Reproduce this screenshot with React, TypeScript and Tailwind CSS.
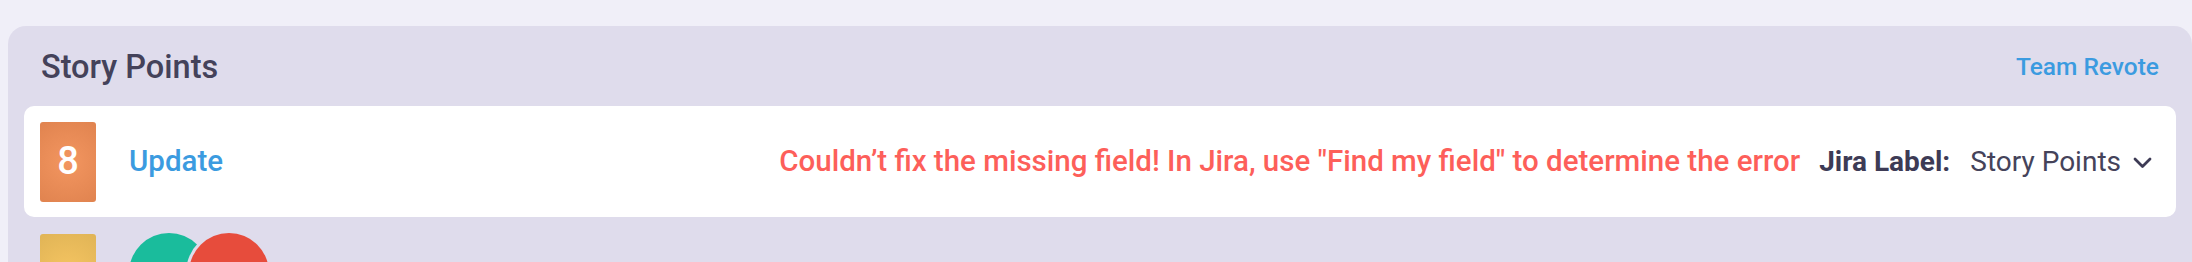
const font = { fontFamily: "Roboto, 'Liberation Sans', sans-serif" };

export default function App() {
  return (
    <div className="w-[2192px] h-[262px] overflow-hidden bg-[#f0eff8] pt-[26px] pl-2" style={font}>
      <div className="rounded-tl-[18px] rounded-tr-[18px] bg-[#dfdcec] px-4 pt-4 h-[260px]">
        {/* header */}
        <div className="flex h-[50px] items-center justify-between px-[17px]">
          <h2 className="text-[32.5px] font-medium text-[#44425a]">Story Points</h2>
          <button className="text-[24.5px] font-medium text-[#3b9be0]">Team Revote</button>
        </div>

        {/* row with the failed vote */}
        <div className="mt-[14px] flex h-[111px] items-center rounded-[10px] bg-white pl-4 pr-6">
          <div className="flex h-20 w-14 items-center justify-center rounded-[3px] bg-[radial-gradient(circle,#f39660_0%,#e0834f_100%)] text-[38px] font-medium text-white">
            8
          </div>
          <button className="ml-[33px] text-[29.5px] font-medium text-[#3b9be0]">Update</button>
          <div className="flex-1" />
          <span className="text-[29.5px] font-medium text-[#fd5f5a]">
            Couldn’t fix the missing field! In Jira, use "Find my field" to determine the error
          </span>
          <span className="ml-[19px] text-[28px] font-bold text-[#3d3b55]">Jira Label:</span>
          <span className="ml-[20px] text-[28px] text-[#45435a]">Story Points</span>
          <svg className="ml-3 mt-[3px] h-[12px] w-[19px]" viewBox="0 0 19 12" fill="none">
            <path d="M2 2l7.5 7.5L17 2" stroke="#3d3b55" strokeWidth="2.8" strokeLinecap="round" strokeLinejoin="round" />
          </svg>
        </div>

        {/* next row, cut off */}
        <div className="mt-[17px] flex items-start pl-4">
          <div className="h-20 w-14 rounded-[3px] bg-[radial-gradient(circle,#f6c562_0%,#e0b456_100%)]" />
          <div className="ml-[33px] mt-[-1px] flex">
            <div className="h-20 w-20 rounded-full bg-[#1abc9c]" />
            <div className="-ml-5 h-20 w-20 rounded-full bg-[#e74c3c] ring-[3px] ring-[#dfdcec]" />
          </div>
        </div>
      </div>
    </div>
  );
}
